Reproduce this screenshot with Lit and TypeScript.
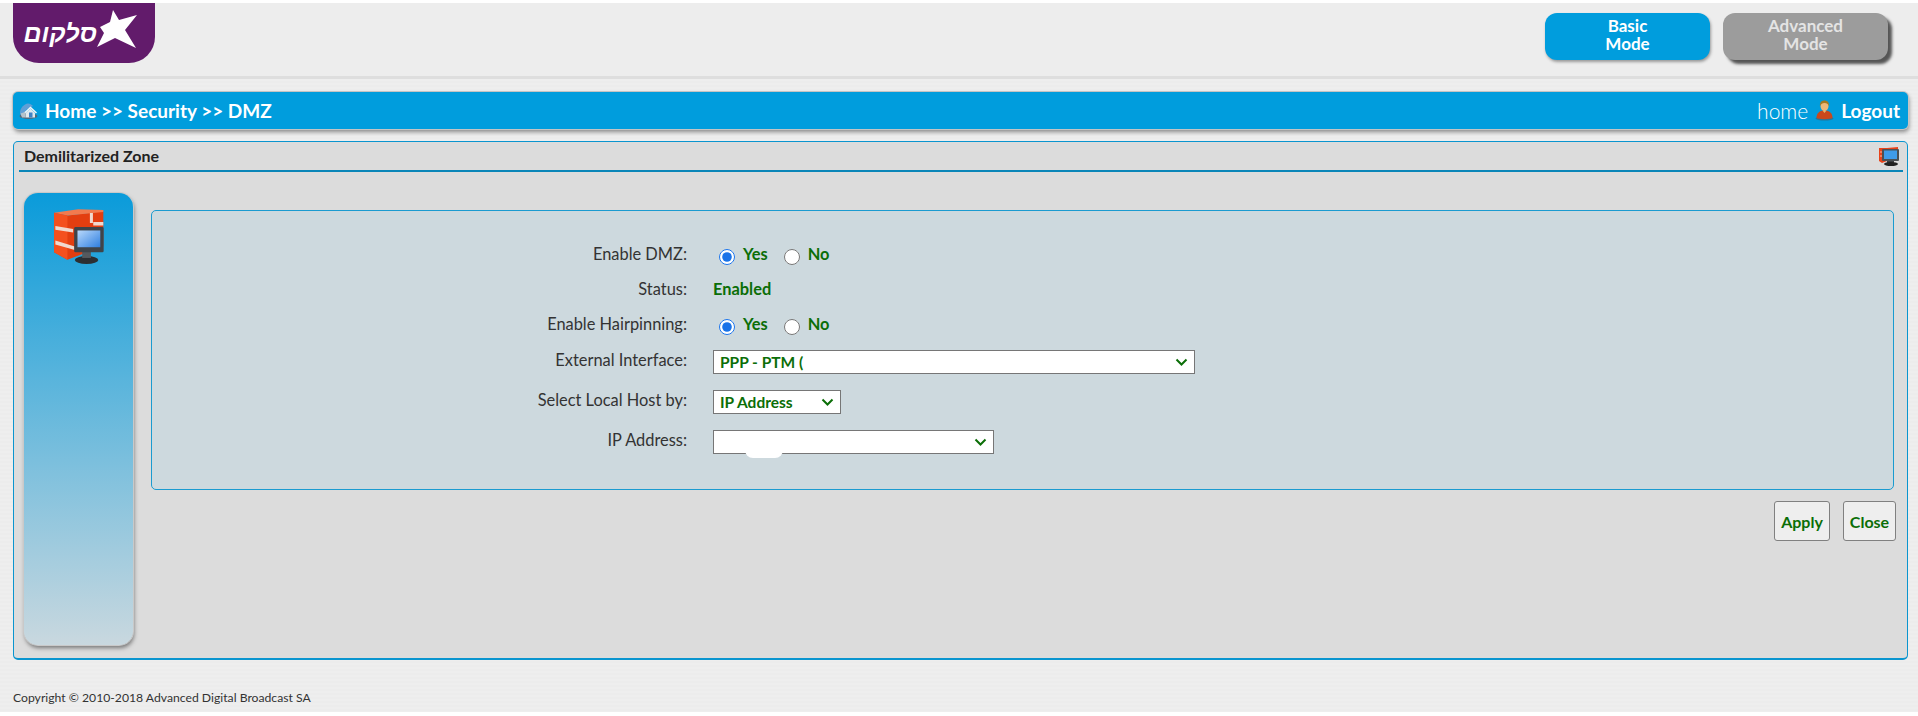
import { LitElement, html, css } from "lit";
import { customElement } from "lit/decorators.js";

const houseIcon = html`<svg width="19" height="18" viewBox="0 0 19 18">
  <ellipse cx="9.500" cy="14" rx="9" ry="3" fill="#51697a" />
  <path d="M1 11C1 6 5 2 9 1.500c2 0 3.500 1 5 2.500L7 8l-2 6H2.500z" fill="#5f9fd6" />
  <path d="M5 10.500 11.500 4.500 18 10.500l-1 1-5.500-5-5.500 5z" fill="#f2f6f8" />
  <path d="M6.500 11 11.500 6.500 16 11v4.500H6.500z" fill="#e2e9ee" />
  <rect x="10" y="10.500" width="3.500" height="5" fill="#3f83c4" />
  <path d="M1.500 11.500 6 10l.500 5.500H3z" fill="#b6c3cc" />
</svg>`;

const userIcon = html`<svg width="19" height="21" viewBox="0 0 19 21">
  <ellipse cx="9.500" cy="18.500" rx="9" ry="2" fill="#34657f" opacity="0.7" />
  <path d="M1.500 18c0-5 3-7.500 8-7.500s8 2.500 8 7.500c-2 1.500-14 1.500-16 0z" fill="#c9481b" />
  <path d="M7.500 10.500h4L9.500 13z" fill="#eab36a" />
  <ellipse cx="9.500" cy="6" rx="4" ry="5" fill="#eeb877" />
  <path d="M5 6.500C4.500 2.500 6.500.5 9.500.5s5 2 4.500 6c-.5-2-2-3.500-4.500-3.500S5.500 4.500 5 6.500z" fill="#a57a22" />
</svg>`;

const smallIcon = html`<svg width="20" height="20" viewBox="0 0 20 20">
  <path d="M0 2h8l11-1v4H8v10l-5 2-3-2z" fill="#e8431a" />
  <path d="M1 6h3M1 10h3" stroke="#f3b9a4" stroke-width="1" />
  <rect x="3" y="3" width="17" height="12" rx="1" fill="#4b5054" />
  <rect x="5" y="4.500" width="13" height="8.500" fill="#3f9be8" />
  <rect x="8" y="15" width="7" height="2" fill="#3a3d40" />
  <ellipse cx="12" cy="18" rx="7" ry="2" fill="#222" />
</svg>`;

// coordinates follow the 3x crop of the reference
const firewallIcon = html`<svg width="51" height="57" viewBox="165 83 152 170">
  <defs>
    <linearGradient id="scr" x1="0" y1="0" x2="1" y2="1">
      <stop offset="0" stop-color="#b8d8fb" />
      <stop offset="1" stop-color="#2f7fe0" />
    </linearGradient>
  </defs>
  <path d="M168 97l40 8 107-12v104l-107 40-40-22z" fill="#e33e10" />
  <path d="M168 97 240 87l75 2v6l-107 10z" fill="#f27a4e" />
  <path d="M168 97l40 8v132l-40-22z" fill="#f4501e" />
  <path d="M172 137l53 9v10l-53-8zM172 180l58 18v10l-58-16z" fill="#f0d9cf" />
  <path d="M275 98h9v30h-9zM285 125h30v10h-30z" fill="#f0d9cf" />
  <ellipse cx="265" cy="238" rx="35" ry="12" fill="#2c2f32" />
  <rect x="252" y="212" width="26" height="20" fill="#55595d" />
  <rect x="228" y="140" width="88" height="75" rx="4" fill="#3f4449" />
  <rect x="238" y="150" width="68" height="50" fill="url(#scr)" />
</svg>`;

@customElement("app-root")
export class AppRoot extends LitElement {
  static styles = css`
    :host {
      display: block;
      height: 716px;
      overflow: hidden;
      background: #fff;
      font-family: "Lato", "Liberation Sans", sans-serif;
      color: #222;
    }
    * {
      box-sizing: border-box;
    }
    .page {
      margin-top: 3px;
      height: 709px;
      background: repeating-linear-gradient(#eeeeee 0 2px, #ececec 2px 4px);
      display: flex;
      flex-direction: column;
    }
    .top {
      height: 76px;
      flex: none;
      background: #ededed;
      border-bottom: 3px solid #dedede;
      padding: 0 30px 0 13px;
      display: flex;
      justify-content: space-between;
      align-items: flex-start;
    }
    .logo {
      width: 142px;
      height: 60px;
      background: #621b6b;
      border-radius: 0 0 26px 26px;
      position: relative;
      color: #fff;
    }
    .logo svg {
      position: absolute;
      left: 82px;
      top: 5px;
    }
    .logo span {
      position: absolute;
      left: 8px;
      top: 15px;
      width: 76px;
      font: italic bold 25px/30px "Liberation Sans", sans-serif;
      direction: rtl;
      text-align: right;
    }
    .modes {
      display: flex;
      gap: 13px;
      padding-top: 10px;
    }
    .mode {
      width: 165px;
      height: 47px;
      border-radius: 12px;
      text-align: center;
      font-size: 17px;
      font-weight: 700;
      line-height: 18px;
      padding-top: 4px;
      color: #fff;
      background: #009ddd;
      box-shadow: 1px 2px 3px #9a9a9a;
    }
    .mode.off {
      background: #9c9c9c;
      color: #e4e4e4;
      box-shadow: 4px 4px 3px #555;
    }
    .crumb {
      flex: none;
      height: 37px;
      margin: 13px 10px 0 13px;
      background: #009ddd;
      border-radius: 5px;
      box-shadow: 0 0 0 1px #c4c4c4, 1px 3px 4px #888;
      color: #fff;
      display: flex;
      align-items: center;
      justify-content: space-between;
      padding: 0 8px 0 6px;
      font-size: 19px;
      font-weight: 700;
    }
    .crumb div {
      display: flex;
      align-items: center;
      gap: 7px;
    }
    .who {
      font-weight: 300;
      font-size: 21px;
    }
    .panel {
      flex: none;
      height: 519px;
      margin: 12px 10px 0 13px;
      background: #dcdcdc;
      border: 1px solid #0a95cf;
      border-bottom-width: 2px;
      border-radius: 5px;
      padding: 0 4px 0 5px;
      display: flex;
      flex-direction: column;
    }
    .title {
      height: 30px;
      flex: none;
      border-bottom: 2px solid #0a86b8;
      display: flex;
      justify-content: space-between;
      align-items: center;
      padding: 0 4px 1px 5px;
      font-size: 16px;
      font-weight: 700;
      color: #222;
    }
    .body {
      flex: 1;
      display: flex;
      gap: 18px;
      padding: 21px 7px 0 5px;
    }
    .side {
      width: 109px;
      height: 452px;
      flex: none;
      border-radius: 14px;
      background: linear-gradient(#0a9bda, #c9d8df);
      box-shadow: 0 0 0 1px #c9c9c9, 1px 3px 4px #777;
      display: flex;
      justify-content: center;
      padding-top: 15px;
    }
    .main {
      flex: 1;
      padding-top: 17px;
    }
    .box {
      height: 280px;
      margin-right: 2px;
      background: #cdd9de;
      border: 1px solid #1a9bd0;
      border-radius: 5px;
      padding-top: 28px;
      display: grid;
      grid-template-columns: 535px 1fr;
      grid-auto-rows: min-content;
      column-gap: 26px;
      font-size: 16.400px;
    }
    .label {
      text-align: right;
      color: #333;
      font-weight: 400;
    }
    .row-h {
      height: 35px;
      line-height: 30px;
    }
    .row-h.last {
      height: 41px;
    }
    .sel-row {
      height: 40px;
      line-height: 20px;
      position: relative;
    }
    .green {
      color: #0b6e07;
      font-weight: 700;
    }
    .radios {
      display: flex;
      align-items: center;
      height: 30px;
      padding-left: 6px;
    }
    .radios input {
      margin: 5px 8px 0 0;
      width: 16px;
      height: 16px;
      accent-color: #1a73e8;
    }
    .radios .green {
      margin-right: 16px;
      margin-top: -2px;
    }
    .select {
      height: 24px;
      border: 1px solid #767676;
      background: #fff;
      display: flex;
      align-items: center;
      justify-content: space-between;
      padding: 0 6px;
      font-size: 15.500px;
      line-height: 22px;
    }
    .select svg {
      flex: none;
    }
    .blob {
      position: absolute;
      left: 32px;
      top: 20px;
      width: 38px;
      height: 8px;
      background: #fff;
      border-radius: 0 0 14px 14px;
    }
    .actions {
      display: flex;
      justify-content: flex-end;
      gap: 13px;
      padding-top: 11px;
    }
    .btn {
      height: 40px;
      border: 1px solid #808080;
      border-radius: 3px;
      background: #eeeeee;
      color: #0b6e07;
      font: 700 16px "Lato", "Liberation Sans", sans-serif;
      padding: 0;
    }
    .copy {
      padding: 30px 0 0 13px;
      font-size: 12.200px;
      color: #333;
    }
  `;

  chevron() {
    return html`<svg width="13" height="8" viewBox="0 0 13 8">
      <path d="M1.500 1.500 6.500 6.500 11.500 1.500" fill="none" stroke="#0b6e07" stroke-width="2" />
    </svg>`;
  }

  radios(name: string) {
    return html`<div class="radios">
      <input type="radio" name=${name} checked /><span class="green">Yes</span>
      <input type="radio" name=${name} /><span class="green">No</span>
    </div>`;
  }

  render() {
    return html`
      <div class="page">
        <div class="top">
          <div class="logo">
            <span>סלקום</span>
            <svg width="45" height="42" viewBox="95 8 45 42">
              <path
                d="M113 10l6 10 18-5-12 15 11 18-21-10-18 9 7-14-4-6 10-5z"
                fill="#fff"
              />
            </svg>
          </div>
          <div class="modes">
            <div class="mode">Basic<br />Mode</div>
            <div class="mode off">Advanced<br />Mode</div>
          </div>
        </div>
        <div class="crumb">
          <div>${houseIcon}<span>Home &gt;&gt; Security &gt;&gt; DMZ</span></div>
          <div><span class="who">home</span>${userIcon}<span>Logout</span></div>
        </div>
        <div class="panel">
          <div class="title">
            <span>Demilitarized Zone</span>
            ${smallIcon}
          </div>
          <div class="body">
            <div class="side">${firewallIcon}</div>
            <div class="main">
              <div class="box">
                <div class="label row-h">Enable DMZ:</div>
                ${this.radios("dmz")}
                <div class="label row-h">Status:</div>
                <div class="green row-h">Enabled</div>
                <div class="label row-h last">Enable Hairpinning:</div>
                ${this.radios("hair")}
                <div class="label sel-row">External Interface:</div>
                <div class="sel-row">
                  <div class="select green" style="width:482px">
                    <span>PPP - PTM (</span>${this.chevron()}
                  </div>
                </div>
                <div class="label sel-row">Select Local Host by:</div>
                <div class="sel-row">
                  <div class="select green" style="width:128px">
                    <span>IP Address</span>${this.chevron()}
                  </div>
                </div>
                <div class="label sel-row">IP Address:</div>
                <div class="sel-row">
                  <div class="select green" style="width:281px">
                    <span></span>${this.chevron()}
                  </div>
                  <div class="blob"></div>
                </div>
              </div>
              <div class="actions">
                <button class="btn" style="width:56px">Apply</button>
                <button class="btn" style="width:53px">Close</button>
              </div>
            </div>
          </div>
        </div>
        <div class="copy">Copyright © 2010-2018 Advanced Digital Broadcast SA</div>
      </div>
    `;
  }
}
